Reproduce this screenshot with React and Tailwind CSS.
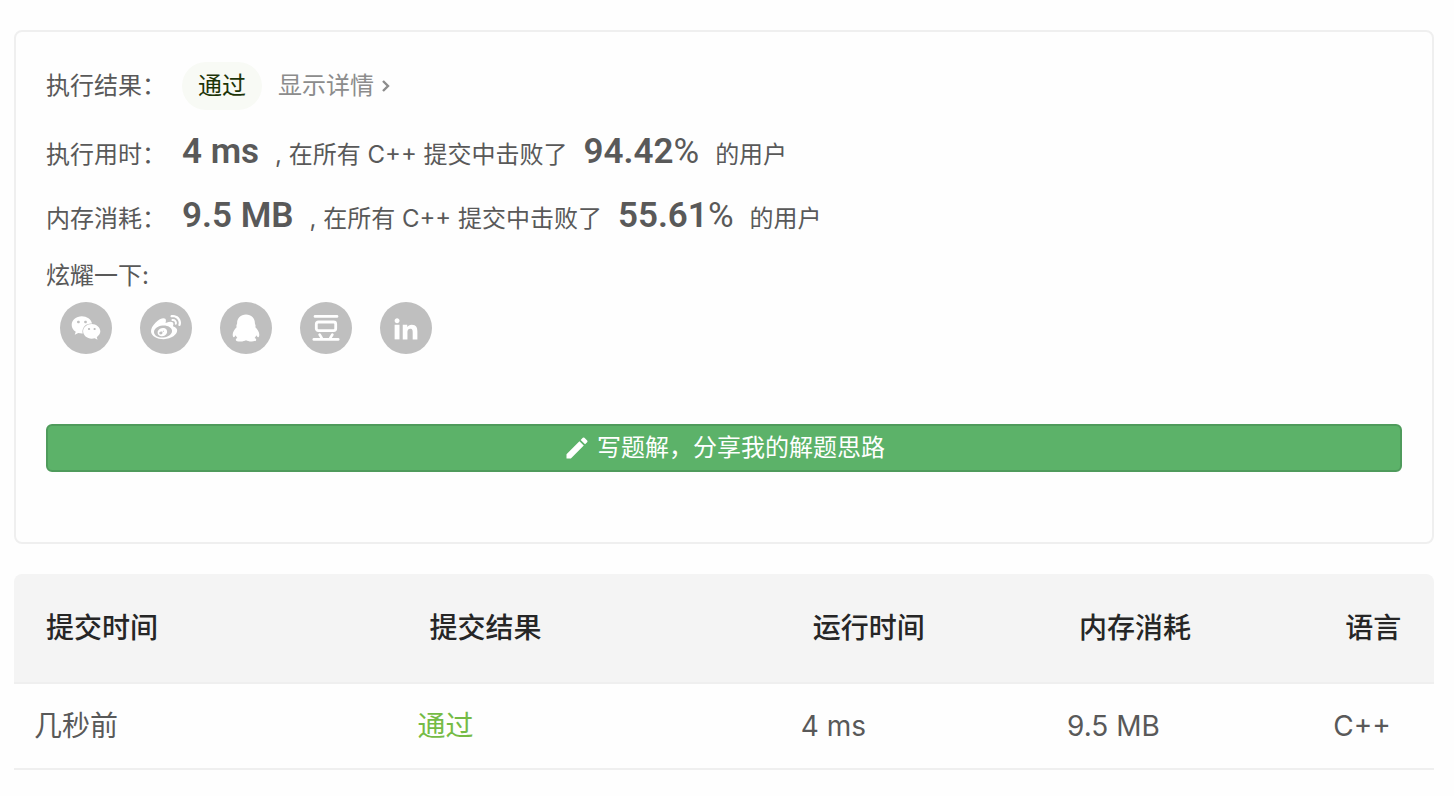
import React from "react";
import { FaWeixin, FaWeibo } from "react-icons/fa";
import { ImLinkedin2 } from "react-icons/im";
import { MdEdit } from "react-icons/md";

const stats = [
    { label: "执行用时：", value: "4 ms", percent: "94.42" },
    { label: "内存消耗：", value: "9.5 MB", percent: "55.61" },
];

const submissions = [
    { time: "几秒前", result: "通过", runtime: "4 ms", memory: "9.5 MB", lang: "C++" },
];

const QqIcon = () => (
    <svg viewBox="0 0 28 28" className="h-7 w-7" fill="currentColor">
        <path d="M14 .6C8.6.6 5.1 4.3 5.1 9.2c0 .9-.7 1.4-.7 2.6 0 .6.2 1 .2 1.4C2.3 15.4.7 18.2.7 20.8c0 1.7.5 2.5 1.1 2.4.7-.1 1.4-1 1.9-1.9.4 1.1.9 2 1.7 2.8-1.2.5-1.7 1.1-1.6 1.8.2 1.2 2.3 1.7 4.9 1.6 2.2-.1 4.1-.6 5.3-1.3 1.2.7 3.1 1.2 5.3 1.3 2.6.1 4.7-.4 4.9-1.6.1-.7-.4-1.3-1.6-1.8.8-.8 1.3-1.7 1.7-2.8.5.9 1.2 1.8 1.9 1.9.6.1 1.1-.7 1.1-2.4 0-2.6-1.6-5.4-3.9-7.6 0-.4.2-.8.2-1.4 0-1.2-.7-1.7-.7-2.6C22.9 4.3 19.4.6 14 .6z" />
    </svg>
);

const DoubanIcon = () => (
    <svg viewBox="0 0 28 28" className="h-7 w-7" fill="none" stroke="currentColor" strokeLinecap="round" strokeLinejoin="round">
        <path d="M3 2.4h22" strokeWidth="2.6" />
        <rect x="4.3" y="8" width="19.4" height="8.6" rx="2" strokeWidth="2.8" />
        <path d="M7.6 20.5l2.2 3.6M20.4 20.5l-2.2 3.6" strokeWidth="2.6" />
        <path d="M1.8 25.4h24.4" strokeWidth="2.6" />
    </svg>
);

const shares = [
    { name: "微信", icon: <FaWeixin className="h-[30px] w-[30px]" /> },
    { name: "微博", icon: <FaWeibo className="h-[30px] w-[30px]" /> },
    { name: "QQ", icon: <QqIcon /> },
    { name: "豆瓣", icon: <DoubanIcon /> },
    { name: "LinkedIn", icon: <ImLinkedin2 className="h-[26px] w-[26px]" /> },
];

// one line with the value and how many users it beats
const StatRow = ({ label, value, percent }) => (
    <div className="flex h-16 items-baseline leading-[52px]">
        <span className="w-[136px]">{label}</span>
        <span className="mr-4 font-['Roboto',sans-serif] text-[35px] leading-[60px] font-semibold">{value}</span>
        <span>, 在所有 C++ 提交中击败了</span>
        <span className="mx-4 font-['Roboto',sans-serif] text-[35px] leading-[60px]">
            <strong className="font-semibold">{percent}</strong>%
        </span>
        <span>的用户</span>
    </div>
);

const App = () => {
    return (
        <div lang="zh-CN" className="min-h-screen bg-[#fefefe] pt-[30px] pr-5 pl-3.5 font-['Inter','Noto_Sans_CJK_SC',sans-serif] text-[#595959]">
            <div className="rounded-lg border-2 border-[#efefef] px-[30px] pt-[30px] pb-[70px] text-2xl">
                <div className="mb-3 flex h-12 items-center">
                    <span className="w-[136px]">执行结果：</span>
                    <span className="mr-4 flex h-12 items-center rounded-full bg-[#f8faf5] px-4 text-[#1d3408]">通过</span>
                    <a href="#detail" className="flex items-center gap-2 text-[#8c8c8c]">
                        显示详情
                        <svg viewBox="0 0 8 12" className="h-3 w-2" fill="none" stroke="currentColor" strokeWidth="2.4">
                            <path d="M1 1l5 5-5 5" />
                        </svg>
                    </a>
                </div>
                {stats.map((stat) => (
                    <StatRow key={stat.label} {...stat} />
                ))}
                <p className="h-[52px] leading-[52px]">炫耀一下:</p>
                <div className="ml-3.5 flex gap-7">
                    {shares.map((share) => (
                        <a key={share.name} href="#share" aria-label={share.name} className="flex h-[52px] w-[52px] items-center justify-center rounded-full bg-[#bfbfbf] text-white">
                            {share.icon}
                        </a>
                    ))}
                </div>
                <button type="button" className="mt-[70px] flex h-12 w-full items-center justify-center gap-1.5 rounded-md border-2 border-[#4f9b5c] bg-[#5cb269] text-white">
                    <MdEdit className="h-7 w-7" />
                    写题解，分享我的解题思路
                </button>
            </div>

            {/* submission history */}
            <table className="mt-[30px] w-full table-fixed border-separate border-spacing-0 text-left text-[28px]">
                <thead>
                    <tr className="h-[110px] text-[#262626] [&>th]:border-b-2 [&>th]:border-[#efefef] [&>th]:bg-[#f4f4f4] [&>th]:pl-8 [&>th]:font-medium">
                        <th className="w-[27%] rounded-tl-lg">提交时间</th>
                        <th className="w-[27%]">提交结果</th>
                        <th className="w-[18.75%]">运行时间</th>
                        <th className="w-[18.75%]">内存消耗</th>
                        <th className="rounded-tr-lg">语言</th>
                    </tr>
                </thead>
                <tbody>
                    {submissions.map((item, index) => (
                        <tr key={index} className="h-[86px] [&>td]:border-b-2 [&>td]:border-[#efefef] [&>td]:pl-5">
                            <td>{item.time}</td>
                            <td>
                                <a href="#submission" className="text-[#75bb45]">{item.result}</a>
                            </td>
                            <td>{item.runtime}</td>
                            <td>{item.memory}</td>
                            <td>{item.lang}</td>
                        </tr>
                    ))}
                </tbody>
            </table>
        </div>
    );
};

export default App;
